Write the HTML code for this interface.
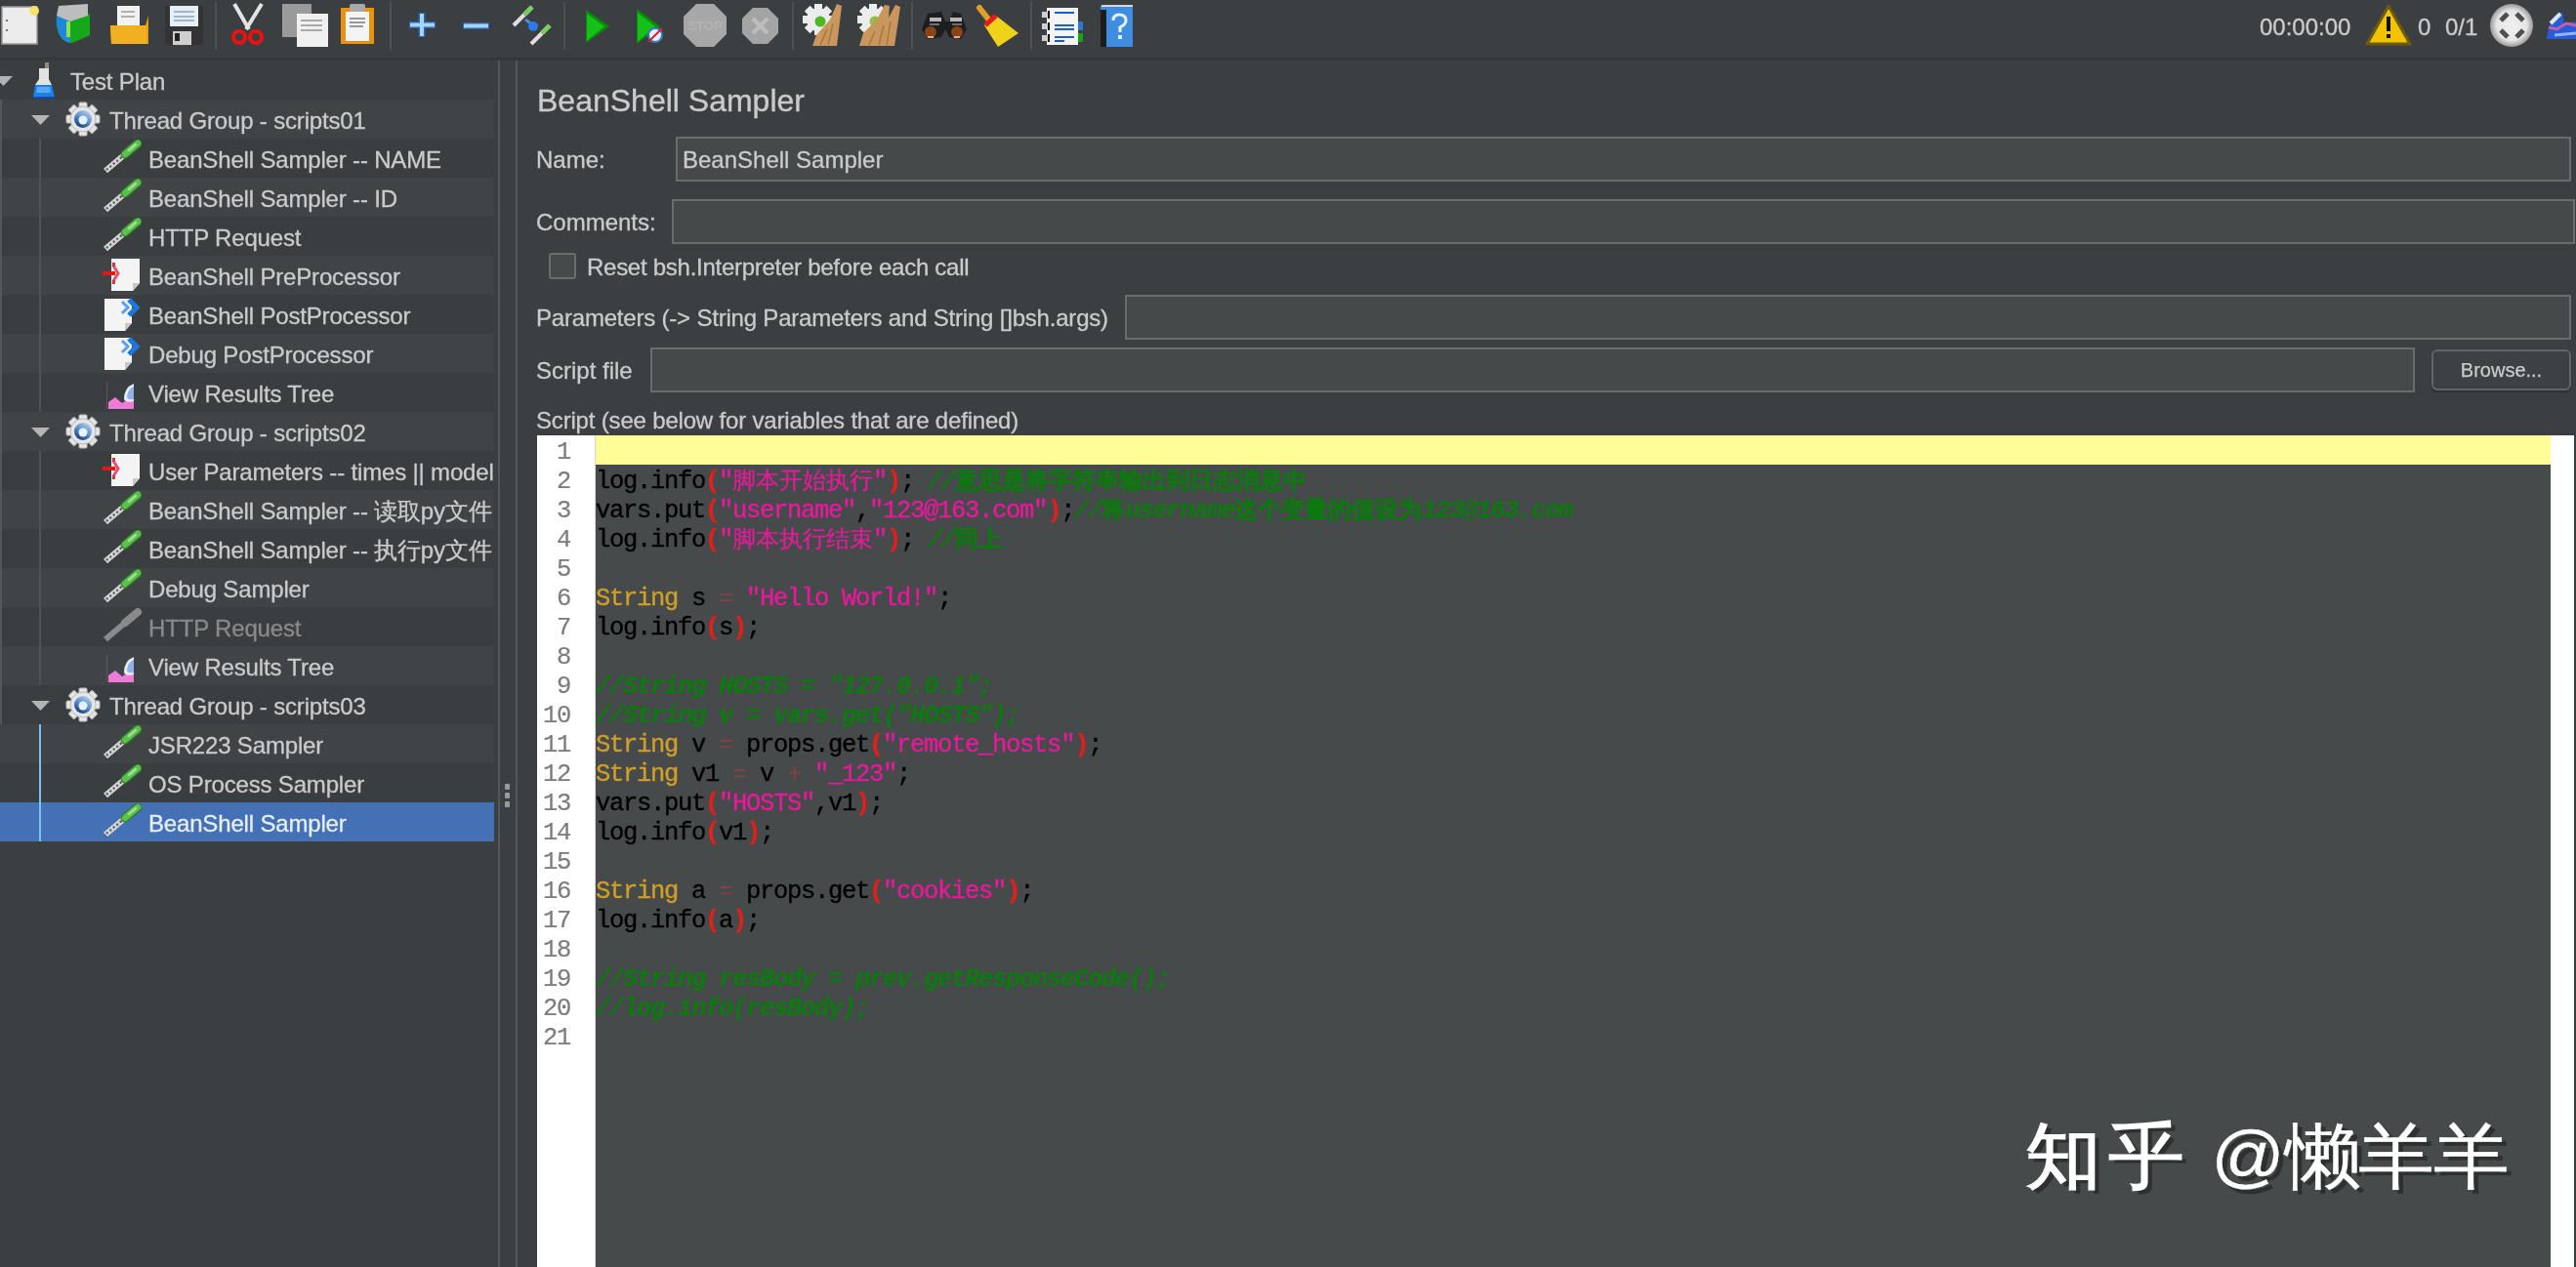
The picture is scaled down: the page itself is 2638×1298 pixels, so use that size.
<!DOCTYPE html>
<html><head><meta charset="utf-8"><title>JMeter</title>
<style>
html,body{margin:0;padding:0;}
body{width:2638px;height:1298px;overflow:hidden;position:relative;will-change:transform;background:#3c3f41;font-family:"Liberation Sans",sans-serif;color:#cbcbcb;}
.a{position:absolute;}
.t{position:absolute;font-size:24px;line-height:40px;white-space:nowrap;margin-top:1px;-webkit-text-stroke:0.3px currentColor;}
.row{position:absolute;left:0;width:506px;height:40px;}
.sep{position:absolute;top:2px;width:2px;height:49px;background:#4e5153;}
.fld{position:absolute;box-sizing:border-box;border:2px solid #6b6d6d;background:#45494a;}
.code{position:absolute;font-family:"Liberation Mono",monospace;font-size:25.5px;letter-spacing:-1.3px;line-height:30px;white-space:pre;color:#000;-webkit-text-stroke:0.35px currentColor;margin-top:3px;}
.cj{font-size:24.2px;letter-spacing:0;-webkit-text-stroke:0.2px currentColor;}
.ln{position:absolute;font-family:"Liberation Mono",monospace;font-size:25.5px;letter-spacing:-1.3px;line-height:30px;white-space:pre;color:#7c7c7c;text-align:right;width:60px;margin-top:3px;-webkit-text-stroke:0.2px currentColor;}
.k{color:#cf9f28}.s{color:#e8199c}.p{color:#e0201c;font-weight:bold}.o{color:#7a4444}.c{color:#0b7b0d;font-style:italic;font-weight:bold;-webkit-text-stroke:0}
.c .cj{font-style:normal;font-weight:bold}
</style></head><body>

<svg width="0" height="0" style="position:absolute">
<defs>
<linearGradient id="gblue" x1="0.8" y1="0" x2="0.2" y2="1"><stop offset="0" stop-color="#b8d4ee"/><stop offset="0.5" stop-color="#5a8ccc"/><stop offset="1" stop-color="#0c3470"/></linearGradient>
<symbol id="pip" viewBox="0 0 40 40">
 <path d="M3 34 L8 30" stroke="#2a2c2d" stroke-width="3" opacity="0.4"/>
 <path d="M3 32 L23 15" stroke="#d4d4d4" stroke-width="6"/>
 <path d="M4 31 L22 16" stroke="#55585a" stroke-width="2.2" stroke-dasharray="2 2.5"/>
 <path d="M23 15 L36 4" stroke="#2f7a2a" stroke-width="9" stroke-linecap="round"/>
 <path d="M23 15 L36 4" stroke="#5cc04c" stroke-width="6.5" stroke-linecap="round"/>
 <path d="M27 11 L34 5" stroke="#a0e090" stroke-width="2.5" stroke-linecap="round"/>
</symbol>
<symbol id="pipd" viewBox="0 0 40 40">
 <path d="M3 32 L23 15" stroke="#8a8a8a" stroke-width="6"/>
 <path d="M23 15 L36 4" stroke="#8a8a8a" stroke-width="8" stroke-linecap="round"/>
</symbol>
<symbol id="gear" viewBox="0 0 36 36">
 <g fill="#e6e6e6" stroke="#b9b9b9" stroke-width="1">
  <rect x="14" y="1" width="8" height="34" rx="1"/>
  <rect x="1" y="14" width="34" height="8" rx="1"/>
  <rect x="14" y="1" width="8" height="34" rx="1" transform="rotate(45 18 18)"/>
  <rect x="1" y="14" width="34" height="8" rx="1" transform="rotate(45 18 18)"/>
  <circle cx="18" cy="18" r="13"/>
 </g>
 <circle cx="18" cy="18" r="9" fill="url(#gblue)"/>
 <circle cx="18" cy="19" r="4.5" fill="#e8f1fb"/>
</symbol>
<symbol id="flask" viewBox="0 0 24 40">
 <rect x="13" y="0" width="4" height="7" fill="#8c8c8c"/>
 <path d="M7 6 H17 V17 L20 23 H3 L7 17 Z" fill="#e2e2e2"/>
 <path d="M3 23 H20 L23 36 H1 Z" fill="#1a80f0"/>
 <path d="M5 25 H18 L19 31 H4 Z" fill="#5aa8f8"/>
 <rect x="1" y="35" width="22" height="2" fill="#0a4ea8"/>
</symbol>
<symbol id="pre" viewBox="0 0 40 40">
 <path d="M9 2 H38 V27 L31 35 H9 Z" fill="#f4f4f4"/>
 <path d="M31 35 L38 27 H31 Z" fill="#c8c8c8"/>
 <rect x="0" y="15" width="13" height="4" fill="#e01818"/>
 <path d="M11 9 L16 17 L11 25" stroke="#e8506a" stroke-width="3" fill="none"/>
 <rect x="10" y="6" width="3" height="4" fill="#e03040"/><rect x="10" y="24" width="3" height="4" fill="#e03040"/>
</symbol>
<symbol id="post" viewBox="0 0 40 40">
 <path d="M2 3 H30 V28 L23 36 H2 Z" fill="#f4f4f4"/>
 <path d="M23 36 L30 28 H23 Z" fill="#c8c8c8"/>
 <path d="M27 4 L35 12 L27 20" stroke="#1b78e0" stroke-width="5" fill="none"/>
 <path d="M20 6 L26 12 L20 18" stroke="#5aa0f0" stroke-width="3" fill="none"/>
</symbol>
<symbol id="chart" viewBox="0 0 40 40">
 <rect x="4" y="8" width="1" height="28" fill="#6a6a6a" opacity="0.6"/>
 <path d="M6 36 V29 L13 24 L20 30 L32 22 V36 Z" fill="#f07ad8"/>
 <path d="M22 26 Q22 14 32 10 V28 Q24 30 22 26 Z" fill="#e4ecfa"/>
 <path d="M25 24 Q25 16 32 13 V26 Q26 27 25 24 Z" fill="#8fb0e8"/>
</symbol>
</defs></svg>

<div class="a" style="left:0;top:0;width:2638px;height:59px;background:#3c3f41"></div>
<div class="a" style="left:0;top:59px;width:2638px;height:3px;background:#35383a"></div>
<div class="sep" style="left:220px"></div>
<div class="sep" style="left:399px"></div>
<div class="sep" style="left:577px"></div>
<div class="sep" style="left:811px"></div>
<div class="sep" style="left:933px"></div>
<div class="sep" style="left:1055px"></div>
<svg class="a" style="left:0;top:0" width="1200" height="58" viewBox="0 0 1200 58">
 <!-- new -->
 <rect x="2" y="7" width="36" height="38" fill="#ececec" stroke="#9a9a9a" stroke-width="1.5"/>
 <circle cx="35" cy="11" r="5" fill="#f4e36a"/>
 <rect x="6" y="20" width="2" height="2" fill="#777"/><rect x="6" y="30" width="2" height="2" fill="#777"/>
 <!-- templates -->
 <path d="M58 18 Q58 44 74 44 L92 36 V14 L74 20 Z" fill="#14a81a"/>
 <path d="M58 16 Q56 40 72 44 L72 20 Z" fill="#1e88d8"/>
 <path d="M60 6 L90 4 L90 16 L72 22 L58 16 Z" fill="#bdbdbd"/>
 <rect x="68" y="22" width="4" height="16" fill="#8ee05a"/>
 <!-- open -->
 <rect x="120" y="6" width="23" height="20" fill="#f2f2f2"/>
 <rect x="124" y="11" width="14" height="2" fill="#b0b0b0"/><rect x="124" y="16" width="14" height="2" fill="#b0b0b0"/>
 <path d="M113 26 H149 L152 16 V45 H114 Z" fill="#e59d12"/>
 <path d="M113 26 H150 V45 H114 Z" fill="#f0b021"/>
 <!-- save -->
 <rect x="169" y="6" width="39" height="40" rx="2" fill="#333"/>
 <rect x="174" y="6" width="29" height="21" fill="#e6eef6"/>
 <rect x="178" y="11" width="21" height="2" fill="#9fb6cc"/><rect x="178" y="16" width="21" height="2" fill="#9fb6cc"/><rect x="178" y="20" width="21" height="2" fill="#9fb6cc"/>
 <rect x="177" y="32" width="19" height="14" fill="#cfcfcf"/>
 <rect x="179" y="34" width="5" height="8" fill="#222"/>
 <!-- cut -->
 <path d="M240 4 L255 30" stroke="#e4e4e4" stroke-width="4"/>
 <path d="M268 4 L252 30" stroke="#e4e4e4" stroke-width="4"/>
 <circle cx="245" cy="38" r="6" fill="none" stroke="#ee1111" stroke-width="4"/>
 <circle cx="262" cy="38" r="6" fill="none" stroke="#ee1111" stroke-width="4"/>
 <!-- copy -->
 <rect x="289" y="4" width="30" height="34" fill="#9a9a9a"/>
 <rect x="304" y="14" width="32" height="34" fill="#f0f0f0"/>
 <rect x="308" y="20" width="22" height="2" fill="#aaa"/><rect x="308" y="25" width="22" height="2" fill="#aaa"/><rect x="308" y="30" width="22" height="2" fill="#aaa"/>
 <!-- paste -->
 <rect x="349" y="8" width="34" height="37" fill="#e8920e"/>
 <rect x="354" y="12" width="24" height="30" fill="#f4f4f4"/>
 <rect x="358" y="4" width="16" height="8" rx="2" fill="#a9a9a9"/>
 <rect x="358" y="18" width="16" height="2" fill="#999"/><rect x="358" y="22" width="16" height="2" fill="#999"/><rect x="358" y="26" width="14" height="2" fill="#999"/>
 <!-- plus -->
 <path d="M432 13 V38 M419 25.5 H446" stroke="#2a64b0" stroke-width="7"/>
 <path d="M432 14 V37 M420 25.5 H445" stroke="#a9d2f7" stroke-width="4"/>
 <!-- minus -->
 <path d="M474 26.5 H501" stroke="#2a64b0" stroke-width="7"/>
 <path d="M475 26.5 H500" stroke="#a9d2f7" stroke-width="4"/>
 <!-- toggle -->
 <path d="M526 26 L537 15" stroke="#e0e0e0" stroke-width="4"/><path d="M537 15 L545 7" stroke="#7ccb64" stroke-width="5"/>
 <path d="M544 45 L555 34" stroke="#e0e0e0" stroke-width="4"/><path d="M555 34 L563 26" stroke="#7ccb64" stroke-width="5"/>
 <path d="M538 20 L546 26" stroke="#4a8ae0" stroke-width="3"/><ellipse cx="546" cy="27" rx="5" ry="5" fill="#2a7ae8"/>
 <!-- start -->
 <path d="M600 10 L624 27 L600 44 Z" fill="#0a8a0a"/><path d="M601 14 L619 27 L601 42 Z" fill="#16c016"/>
 <path d="M652 9 L676 27 L652 45 Z" fill="#0a8a0a"/><path d="M653 13 L671 27 L653 43 Z" fill="#16c016"/>
 <circle cx="671" cy="36" r="7" fill="#e8f0ff" stroke="#3a78d0" stroke-width="2"/><path d="M664 43 L678 29" stroke="#e02020" stroke-width="2"/>
 <!-- stop -->
 <path d="M713 4 H731 L744 17 V35 L731 48 H713 L700 35 V17 Z" fill="#a7a7a7"/>
 <text x="722" y="31" font-family="Liberation Sans" font-size="13" font-weight="bold" fill="#b3b3b3" text-anchor="middle">STOP</text>
 <path d="M771 8 H786 L797 19 V34 L786 45 H771 L760 34 V19 Z" fill="#a4a4a4"/>
 <path d="M771 19 L786 34 M786 19 L771 34" stroke="#bdbdbd" stroke-width="4"/>
 <!-- clear -->
 <g fill="#ececec">
  <circle cx="838" cy="20" r="12"/>
  <rect x="834" y="4" width="8" height="32"/><rect x="822" y="16" width="32" height="8"/>
  <rect x="834" y="4" width="8" height="32" transform="rotate(45 838 20)"/><rect x="822" y="16" width="32" height="8" transform="rotate(45 838 20)"/>
 </g>
 <circle cx="840" cy="22" r="5.5" fill="#4cb825"/>
 <path d="M832 47 L836 36 L850 20 L857 4 L862 6 L857 47 Z" fill="#c9975e"/>
 <path d="M840 46 L847 30 M848 46 L853 24" stroke="#a7773f" stroke-width="1.5"/>
 <g fill="#ececec">
  <circle cx="894" cy="20" r="12"/>
  <rect x="890" y="4" width="8" height="32"/><rect x="878" y="16" width="32" height="8"/>
  <rect x="890" y="4" width="8" height="32" transform="rotate(45 894 20)"/><rect x="878" y="16" width="32" height="8" transform="rotate(45 894 20)"/>
 </g>
 <circle cx="896" cy="22" r="5.5" fill="#8cc040"/>
 <path d="M880 47 L884 34 L898 20 L906 5 L911 6 L910 18 L917 5 L922 7 L916 47 Z" fill="#c9975e"/>
 <path d="M890 46 L896 32 M900 46 L905 26 M908 46 L912 22" stroke="#a7773f" stroke-width="1.5"/>
 <!-- binoculars -->
 <path d="M950 14 L964 12 L968 22 H972 L976 12 L984 14 L990 30 L984 40 L972 38 L968 30 L964 38 L950 40 L944 30 Z" fill="#1e1e1e"/>
 <rect x="952" y="18" width="12" height="4" fill="#b8b8b8"/><rect x="973" y="18" width="12" height="4" fill="#b8b8b8"/>
 <rect x="952" y="24" width="10" height="2" fill="#707070"/><rect x="975" y="24" width="10" height="2" fill="#707070"/>
 <circle cx="953" cy="33" r="6" fill="#8a4416"/><circle cx="980" cy="33" r="6" fill="#8a4416"/>
 <rect x="950" y="37" width="6" height="2" fill="#e0b090"/><rect x="977" y="37" width="6" height="2" fill="#e0b090"/>
 <!-- broom -->
 <path d="M1003 8 L1014 22" stroke="#e0a028" stroke-width="6" stroke-linecap="round"/>
 <path d="M1008 26 L1020 16 L1043 34 L1022 48 Z" fill="#efd21a"/>
 <path d="M1009 26 L1020 16" stroke="#e81c1c" stroke-width="5"/>
 <!-- function helper -->
 <rect x="1072" y="8" width="32" height="38" fill="#f4f4f4"/>
 <rect x="1067" y="12" width="8" height="6" fill="#cfcfcf"/><rect x="1067" y="24" width="8" height="6" fill="#cfcfcf"/><rect x="1067" y="36" width="8" height="6" fill="#cfcfcf"/>
 <rect x="1073" y="11" width="2" height="8" fill="#111"/><rect x="1073" y="23" width="2" height="8" fill="#111"/><rect x="1073" y="35" width="2" height="8" fill="#111"/>
 <rect x="1080" y="12" width="20" height="2" fill="#1a5fc8"/><rect x="1080" y="25" width="20" height="2" fill="#1a5fc8"/><rect x="1080" y="29" width="20" height="2" fill="#1a5fc8"/><rect x="1080" y="37" width="20" height="2" fill="#1a5fc8"/><rect x="1080" y="41" width="10" height="2" fill="#1a5fc8"/>
 <rect x="1104" y="22" width="5" height="9" fill="#2a7ad0"/><rect x="1104" y="34" width="5" height="9" fill="#17a01a"/>
 <!-- help -->
 <rect x="1127" y="6" width="33" height="42" fill="#3f8de0"/>
 <rect x="1127" y="10" width="6" height="38" fill="#1c1c1c"/>
 <rect x="1128" y="5" width="32" height="2" fill="#d8d8d8"/>
 <path d="M1140 21 Q1140 15 1146 15 Q1153 15 1153 21 Q1153 25 1147 28 V33" stroke="#e8f0ff" stroke-width="3" fill="none"/>
 <rect x="1145" y="36" width="4" height="4" fill="#e8f0ff"/>
</svg>

<div class="t" style="left:2314px;top:7px;">00:00:00</div>
<div class="t" style="left:2476px;top:7px;">0</div>
<div class="t" style="left:2504px;top:7px;">0/1</div>
<svg class="a" style="left:2400px;top:0" width="238" height="58" viewBox="2400 0 238 58">
 <path d="M2446 6 L2468 45 H2424 Z" fill="#f2c400" stroke="#6b5a10" stroke-width="3" stroke-linejoin="round"/>
 <rect x="2444" y="17" width="4" height="15" fill="#111"/><rect x="2444" y="35" width="4" height="4" fill="#111"/>
 <defs><radialGradient id="cg"><stop offset="0" stop-color="#f0f0f0"/><stop offset="0.7" stop-color="#e6e6e6"/><stop offset="1" stop-color="#9a9a9a"/></radialGradient></defs>
 <circle cx="2572" cy="26" r="22" fill="url(#cg)"/>
 <path d="M2561 21 L2568 14 M2577 14 L2584 21 M2561 31 L2568 38 M2577 38 L2584 31" stroke="#505050" stroke-width="5"/>
 <path d="M2608 38 L2612 22 L2620 14 L2624 12 L2626 24 L2636 22 L2638 24 V40 H2608 Z" fill="#2a5ad8"/>
 <path d="M2612 24 L2622 14" stroke="#d8e8ff" stroke-width="4"/>
 <path d="M2610 28 L2618 30 L2628 24 L2638 26" stroke="#c060a8" stroke-width="3" fill="none"/>
 <path d="M2616 36 L2638 34" stroke="#90b8f0" stroke-width="3"/>
</svg>

<div class="a" style="left:0;top:62px;width:507px;height:1236px;overflow:hidden">
<div class="row" style="top:0px;background:#3b3e40"></div>
<div class="row" style="top:40px;background:#414446"></div>
<div class="row" style="top:80px;background:#3b3e40"></div>
<div class="row" style="top:120px;background:#414446"></div>
<div class="row" style="top:160px;background:#3b3e40"></div>
<div class="row" style="top:200px;background:#414446"></div>
<div class="row" style="top:240px;background:#3b3e40"></div>
<div class="row" style="top:280px;background:#414446"></div>
<div class="row" style="top:320px;background:#3b3e40"></div>
<div class="row" style="top:360px;background:#414446"></div>
<div class="row" style="top:400px;background:#3b3e40"></div>
<div class="row" style="top:440px;background:#414446"></div>
<div class="row" style="top:480px;background:#3b3e40"></div>
<div class="row" style="top:520px;background:#414446"></div>
<div class="row" style="top:560px;background:#3b3e40"></div>
<div class="row" style="top:600px;background:#414446"></div>
<div class="row" style="top:640px;background:#3b3e40"></div>
<div class="row" style="top:680px;background:#414446"></div>
<div class="row" style="top:720px;background:#3b3e40"></div>
<div class="row" style="top:760px;background:#4470b6"></div>
<div class="a" style="left:0;top:40px;width:2px;height:640px;background:#54575a"></div>
<div class="a" style="left:40px;top:80px;width:2px;height:280px;background:#505355"></div>
<div class="a" style="left:40px;top:400px;width:2px;height:240px;background:#505355"></div>
<div class="a" style="left:40px;top:680px;width:2px;height:120px;background:#7cc0f4"></div>
<svg class="a" style="left:-6px;top:16px" width="20" height="11" viewBox="0 0 20 11"><path d="M0 0 H19 L9.5 10 Z" fill="#b4b4b4"/></svg>
<svg class="a" style="left:33px;top:2px" width="24" height="40"><use href="#flask"/></svg>
<div class="t" style="left:72px;top:1px;color:#cbcbcb;letter-spacing:-0.17px">Test Plan</div>
<svg class="a" style="left:32px;top:56px" width="20" height="11" viewBox="0 0 20 11"><path d="M0 0 H19 L9.5 10 Z" fill="#b4b4b4"/></svg>
<svg class="a" style="left:67px;top:42px" width="36" height="36"><use href="#gear"/></svg>
<div class="t" style="left:112px;top:41px;color:#cbcbcb;letter-spacing:-0.17px">Thread Group - scripts01</div>
<svg class="a" style="left:105px;top:81px" width="40" height="40"><use href="#pip"/></svg>
<div class="t" style="left:152px;top:81px;color:#cbcbcb;letter-spacing:-0.17px">BeanShell Sampler -- NAME</div>
<svg class="a" style="left:105px;top:121px" width="40" height="40"><use href="#pip"/></svg>
<div class="t" style="left:152px;top:121px;color:#cbcbcb;letter-spacing:-0.17px">BeanShell Sampler -- ID</div>
<svg class="a" style="left:105px;top:161px" width="40" height="40"><use href="#pip"/></svg>
<div class="t" style="left:152px;top:161px;color:#cbcbcb;letter-spacing:-0.17px">HTTP Request</div>
<svg class="a" style="left:105px;top:201px" width="40" height="40"><use href="#pre"/></svg>
<div class="t" style="left:152px;top:201px;color:#cbcbcb;letter-spacing:-0.17px">BeanShell PreProcessor</div>
<svg class="a" style="left:105px;top:241px" width="40" height="40"><use href="#post"/></svg>
<div class="t" style="left:152px;top:241px;color:#cbcbcb;letter-spacing:-0.17px">BeanShell PostProcessor</div>
<svg class="a" style="left:105px;top:281px" width="40" height="40"><use href="#post"/></svg>
<div class="t" style="left:152px;top:281px;color:#cbcbcb;letter-spacing:-0.17px">Debug PostProcessor</div>
<svg class="a" style="left:105px;top:321px" width="40" height="40"><use href="#chart"/></svg>
<div class="t" style="left:152px;top:321px;color:#cbcbcb;letter-spacing:-0.17px">View Results Tree</div>
<svg class="a" style="left:32px;top:376px" width="20" height="11" viewBox="0 0 20 11"><path d="M0 0 H19 L9.5 10 Z" fill="#b4b4b4"/></svg>
<svg class="a" style="left:67px;top:362px" width="36" height="36"><use href="#gear"/></svg>
<div class="t" style="left:112px;top:361px;color:#cbcbcb;letter-spacing:-0.17px">Thread Group - scripts02</div>
<svg class="a" style="left:105px;top:401px" width="40" height="40"><use href="#pre"/></svg>
<div class="t" style="left:152px;top:401px;color:#cbcbcb;letter-spacing:-0.17px">User Parameters -- times || model</div>
<svg class="a" style="left:105px;top:441px" width="40" height="40"><use href="#pip"/></svg>
<div class="t" style="left:152px;top:441px;color:#cbcbcb;letter-spacing:-0.17px">BeanShell Sampler -- 读取py文件</div>
<svg class="a" style="left:105px;top:481px" width="40" height="40"><use href="#pip"/></svg>
<div class="t" style="left:152px;top:481px;color:#cbcbcb;letter-spacing:-0.17px">BeanShell Sampler -- 执行py文件</div>
<svg class="a" style="left:105px;top:521px" width="40" height="40"><use href="#pip"/></svg>
<div class="t" style="left:152px;top:521px;color:#cbcbcb;letter-spacing:-0.17px">Debug Sampler</div>
<svg class="a" style="left:105px;top:561px" width="40" height="40"><use href="#pipd"/></svg>
<div class="t" style="left:152px;top:561px;color:#8a8a8a;letter-spacing:-0.17px">HTTP Request</div>
<svg class="a" style="left:105px;top:601px" width="40" height="40"><use href="#chart"/></svg>
<div class="t" style="left:152px;top:601px;color:#cbcbcb;letter-spacing:-0.17px">View Results Tree</div>
<svg class="a" style="left:32px;top:656px" width="20" height="11" viewBox="0 0 20 11"><path d="M0 0 H19 L9.5 10 Z" fill="#b4b4b4"/></svg>
<svg class="a" style="left:67px;top:642px" width="36" height="36"><use href="#gear"/></svg>
<div class="t" style="left:112px;top:641px;color:#cbcbcb;letter-spacing:-0.17px">Thread Group - scripts03</div>
<svg class="a" style="left:105px;top:681px" width="40" height="40"><use href="#pip"/></svg>
<div class="t" style="left:152px;top:681px;color:#cbcbcb;letter-spacing:-0.17px">JSR223 Sampler</div>
<svg class="a" style="left:105px;top:721px" width="40" height="40"><use href="#pip"/></svg>
<div class="t" style="left:152px;top:721px;color:#cbcbcb;letter-spacing:-0.17px">OS Process Sampler</div>
<svg class="a" style="left:105px;top:761px" width="40" height="40"><use href="#pip"/></svg>
<div class="t" style="left:152px;top:761px;color:#e8eef8;letter-spacing:-0.17px">BeanShell Sampler</div>
</div>
<div class="a" style="left:510px;top:62px;width:2px;height:1236px;background:#54585a"></div>
<div class="a" style="left:528px;top:62px;width:2px;height:1236px;background:#54585a"></div>
<div class="a" style="left:517px;top:803px;width:5px;height:6px;background:#9a9a9a;border-radius:1px"></div>
<div class="a" style="left:517px;top:812px;width:5px;height:6px;background:#9a9a9a;border-radius:1px"></div>
<div class="a" style="left:517px;top:821px;width:5px;height:6px;background:#9a9a9a;border-radius:1px"></div>
<div class="a" style="left:550px;top:83px;font-size:32px;line-height:40px;white-space:nowrap;-webkit-text-stroke:0.35px currentColor">BeanShell Sampler</div>
<div class="t" style="left:549px;top:143px">Name:</div>
<div class="fld" style="left:692px;top:140px;width:1941px;height:46px"></div>
<div class="t" style="left:699px;top:143px">BeanShell Sampler</div>
<div class="t" style="left:549px;top:207px">Comments:</div>
<div class="fld" style="left:688px;top:204px;width:1949px;height:46px"></div>
<div class="a" style="left:562px;top:259px;width:28px;height:27px;box-sizing:border-box;border:2px solid #6b6d6d;border-radius:3px;background:#454a4a"></div>
<div class="t" style="left:601px;top:253px;letter-spacing:-0.27px">Reset bsh.Interpreter before each call</div>
<div class="t" style="left:549px;top:305px;letter-spacing:-0.2px">Parameters (-&gt; String Parameters and String []bsh.args)</div>
<div class="fld" style="left:1152px;top:302px;width:1481px;height:46px"></div>
<div class="t" style="left:549px;top:359px">Script file</div>
<div class="fld" style="left:666px;top:356px;width:1807px;height:46px"></div>
<div class="a" style="left:2490px;top:358px;width:143px;height:42px;box-sizing:border-box;border:2px solid #626565;border-radius:6px;background:#3d4143;font-size:20px;line-height:38px;text-align:center;-webkit-text-stroke:0.25px currentColor;box-shadow:0 2px 2px rgba(0,0,0,0.25)">Browse...</div>
<div class="t" style="left:549px;top:410px;letter-spacing:-0.18px">Script (see below for variables that are defined)</div>
<div class="a" style="left:550px;top:446px;width:60px;height:852px;background:#ffffff"></div>
<div class="a" style="left:609px;top:446px;width:1px;height:852px;background:#d8d8d8"></div>
<div class="a" style="left:610px;top:446px;width:2002px;height:852px;background:#464a4b"></div>
<div class="a" style="left:610px;top:446px;width:2002px;height:30px;background:#fefd98"></div>
<div class="a" style="left:2612px;top:446px;width:24px;height:852px;background:#ffffff"></div>
<div class="ln" style="left:524px;top:446px">1</div>
<div class="ln" style="left:524px;top:476px">2</div>
<div class="code" style="left:610px;top:476px">log.info<span class="p">(</span><span class="s">"<span class="cj">脚本开始执行</span>"</span><span class="p">)</span>; <span class="c">//<span class="cj">意思是将字符串输出到日志消息中</span></span></div>
<div class="ln" style="left:524px;top:506px">3</div>
<div class="code" style="left:610px;top:506px">vars.put<span class="p">(</span><span class="s">"username"</span>,<span class="s">"123@163.com"</span><span class="p">)</span>;<span class="c">//<span class="cj">将</span>username<span class="cj">这个变量的值设为</span>123@163.com</span></div>
<div class="ln" style="left:524px;top:536px">4</div>
<div class="code" style="left:610px;top:536px">log.info<span class="p">(</span><span class="s">"<span class="cj">脚本执行结束</span>"</span><span class="p">)</span>; <span class="c">//<span class="cj">同上</span></span></div>
<div class="ln" style="left:524px;top:566px">5</div>
<div class="ln" style="left:524px;top:596px">6</div>
<div class="code" style="left:610px;top:596px"><span class="k">String</span> s <span class="o">=</span> <span class="s">"Hello World!"</span>;</div>
<div class="ln" style="left:524px;top:626px">7</div>
<div class="code" style="left:610px;top:626px">log.info<span class="p">(</span>s<span class="p">)</span>;</div>
<div class="ln" style="left:524px;top:656px">8</div>
<div class="ln" style="left:524px;top:686px">9</div>
<div class="code" style="left:610px;top:686px"><span class="c">//String HOSTS = "127.0.0.1";</span></div>
<div class="ln" style="left:524px;top:716px">10</div>
<div class="code" style="left:610px;top:716px"><span class="c">//String v = vars.get("HOSTS");</span></div>
<div class="ln" style="left:524px;top:746px">11</div>
<div class="code" style="left:610px;top:746px"><span class="k">String</span> v <span class="o">=</span> props.get<span class="p">(</span><span class="s">"remote_hosts"</span><span class="p">)</span>;</div>
<div class="ln" style="left:524px;top:776px">12</div>
<div class="code" style="left:610px;top:776px"><span class="k">String</span> v1 <span class="o">=</span> v <span class="o">+</span> <span class="s">"_123"</span>;</div>
<div class="ln" style="left:524px;top:806px">13</div>
<div class="code" style="left:610px;top:806px">vars.put<span class="p">(</span><span class="s">"HOSTS"</span>,v1<span class="p">)</span>;</div>
<div class="ln" style="left:524px;top:836px">14</div>
<div class="code" style="left:610px;top:836px">log.info<span class="p">(</span>v1<span class="p">)</span>;</div>
<div class="ln" style="left:524px;top:866px">15</div>
<div class="ln" style="left:524px;top:896px">16</div>
<div class="code" style="left:610px;top:896px"><span class="k">String</span> a <span class="o">=</span> props.get<span class="p">(</span><span class="s">"cookies"</span><span class="p">)</span>;</div>
<div class="ln" style="left:524px;top:926px">17</div>
<div class="code" style="left:610px;top:926px">log.info<span class="p">(</span>a<span class="p">)</span>;</div>
<div class="ln" style="left:524px;top:956px">18</div>
<div class="ln" style="left:524px;top:986px">19</div>
<div class="code" style="left:610px;top:986px"><span class="c">//String resBody = prev.getResponseCode();</span></div>
<div class="ln" style="left:524px;top:1016px">20</div>
<div class="code" style="left:610px;top:1016px"><span class="c">//log.info(resBody);</span></div>
<div class="ln" style="left:524px;top:1046px">21</div>
<div class="a" style="left:2063px;top:1134px;width:100px;text-align:center;font-size:78px;line-height:100px;color:#fff;text-shadow:5px 5px 0 #2e3030;font-weight:500;-webkit-text-stroke:1.5px #fff;transform:scaleY(0.95);transform-origin:0 50%">知</div>
<div class="a" style="left:2148px;top:1134px;width:100px;text-align:center;font-size:78px;line-height:100px;color:#fff;text-shadow:5px 5px 0 #2e3030;font-weight:500;-webkit-text-stroke:1.5px #fff;transform:scaleY(0.95);transform-origin:0 50%">乎</div>
<div class="a" style="left:2252px;top:1134px;width:100px;text-align:center;font-size:74px;line-height:100px;color:#fff;text-shadow:5px 5px 0 #2e3030;font-weight:normal;-webkit-text-stroke:0.4px #fff;transform:scaleY(0.95);transform-origin:0 50%">@</div>
<div class="a" style="left:2329px;top:1134px;width:100px;text-align:center;font-size:78px;line-height:100px;color:#fff;text-shadow:5px 5px 0 #2e3030;font-weight:normal;-webkit-text-stroke:0.4px #fff;transform:scaleY(0.95);transform-origin:0 50%">懒</div>
<div class="a" style="left:2404px;top:1134px;width:100px;text-align:center;font-size:78px;line-height:100px;color:#fff;text-shadow:5px 5px 0 #2e3030;font-weight:normal;-webkit-text-stroke:0.4px #fff;transform:scaleY(0.95);transform-origin:0 50%">羊</div>
<div class="a" style="left:2481px;top:1134px;width:100px;text-align:center;font-size:78px;line-height:100px;color:#fff;text-shadow:5px 5px 0 #2e3030;font-weight:normal;-webkit-text-stroke:0.4px #fff;transform:scaleY(0.95);transform-origin:0 50%">羊</div>
</body></html>
